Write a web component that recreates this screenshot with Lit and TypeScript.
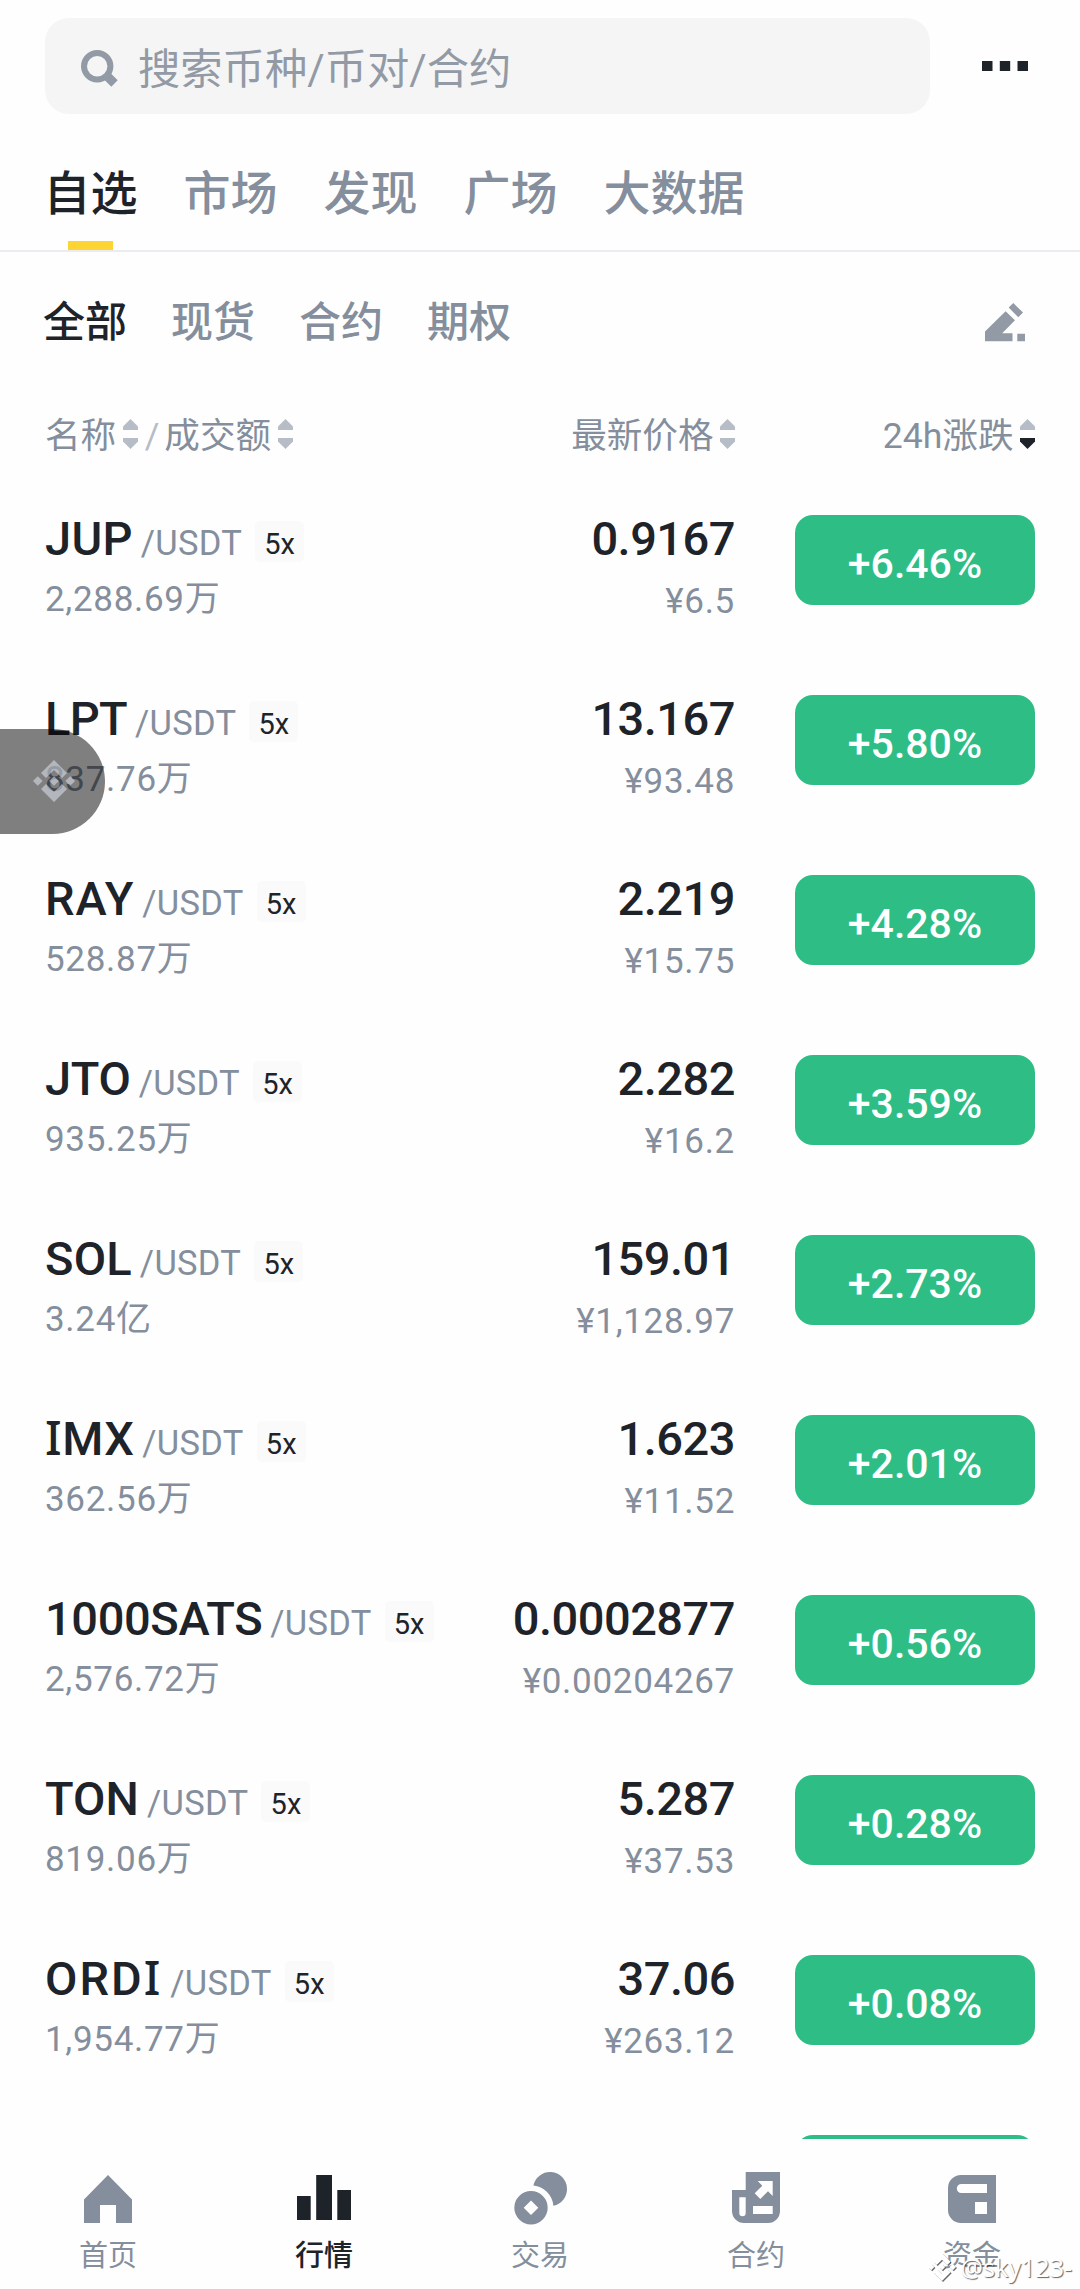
import { LitElement, html, css, svg } from "lit";
import { customElement, property } from "lit/decorators.js";
import { classMap } from "lit/directives/class-map.js";
import { styleMap } from "lit/directives/style-map.js";

interface Pair {
  symbol: string;
  tracking: number;
  volume: string;
  price: string;
  fiat: string;
  change: string;
}

const PAIRS: Pair[] = [
  { symbol: "JUP", tracking: 0.3, volume: "2,288.69万", price: "0.9167", fiat: "¥6.5", change: "+6.46%" },
  { symbol: "LPT", tracking: -0.7, volume: "837.76万", price: "13.167", fiat: "¥93.48", change: "+5.80%" },
  { symbol: "RAY", tracking: 0.8, volume: "528.87万", price: "2.219", fiat: "¥15.75", change: "+4.28%" },
  { symbol: "JTO", tracking: -0.3, volume: "935.25万", price: "2.282", fiat: "¥16.2", change: "+3.59%" },
  { symbol: "SOL", tracking: 0.2, volume: "3.24亿", price: "159.01", fiat: "¥1,128.97", change: "+2.73%" },
  { symbol: "IMX", tracking: 0.5, volume: "362.56万", price: "1.623", fiat: "¥11.52", change: "+2.01%" },
  { symbol: "1000SATS", tracking: -0.4, volume: "2,576.72万", price: "0.0002877", fiat: "¥0.00204267", change: "+0.56%" },
  { symbol: "TON", tracking: 0.1, volume: "819.06万", price: "5.287", fiat: "¥37.53", change: "+0.28%" },
  { symbol: "ORDI", tracking: 2, volume: "1,954.77万", price: "37.06", fiat: "¥263.12", change: "+0.08%" },
];

const logoShape = svg`
  <path d="M21 0 34 13 29 18 21 10 13 18 8 13Z"/>
  <path d="M21 42 34 29 29 24 21 32 13 24 8 29Z"/>
  <path d="M21 16.2 25.8 21 21 25.8 16.2 21Z"/>
  <path d="M4.8 16.2 9.6 21 4.8 25.8 0 21Z"/>
  <path d="M37.2 16.2 42 21 37.2 25.8 32.4 21Z"/>`;

@customElement("sort-arrows")
class SortArrows extends LitElement {
  @property({ type: Boolean }) down = false;
  static styles = css`
    :host { display: block; width: 15px; height: 30px; }
    svg { display: block; }
    .idle { fill: #b7bdc6; }
    .on { fill: #1e2329; }
  `;
  render() {
    return html`<svg width="15" height="30" viewBox="0 0 15 30">
      <path class="idle" d="M0 11V7.5L7.5 0 15 7.5V11Z" />
      <path class=${this.down ? "on" : "idle"} d="M0 19V22.5L7.5 30 15 22.5V19Z" />
    </svg>`;
  }
}

@customElement("pair-row")
class PairRow extends LitElement {
  @property({ attribute: false }) pair!: Pair;
  static styles = css`
    :host {
      display: grid;
      grid-template-columns: 1fr auto 240px;
      height: 180px;
      padding: 0 45px;
      box-sizing: border-box;
    }
    .cell { display: flex; flex-direction: column; padding-top: 14px; white-space: nowrap; }
    .title { display: flex; align-items: baseline; height: 60px; }
    .symbol, .price {
      font-size: 47px; line-height: 60px; font-weight: 500; letter-spacing: -0.5px; color: #1e2329;
    }
    .slab { font-family: "Noto Sans", sans-serif; line-height: 0; }
    .quote { font-size: 34.5px; line-height: 60px; margin-left: 8px; letter-spacing: 0.3px; color: #848e9c; }
    .lever {
      box-sizing: border-box; width: 49px; height: 41px; margin-left: 13px; border-radius: 5px;
      background: #fafafa; text-align: center; font-size: 29px; line-height: 47px; color: #1e2329;
      transform: translateY(-1px);
    }
    .minor { font-size: 35px; line-height: 40px; letter-spacing: 0.7px; color: #848e9c; margin-top: 11px; }
    .value { align-items: flex-end; margin-right: 60px; }
    .value .minor { margin-top: 13px; }
    .change {
      height: 90px; margin-top: 20px; border-radius: 18px; background: #2ebd85; color: #fff;
      text-align: center; font-size: 41px; font-weight: 500; line-height: 98px;
    }
  `;
  render() {
    const p = this.pair;
    const symbol = [...p.symbol].map((c) => (c === "I" ? html`<span class="slab">I</span>` : c));
    return html`
      <div class="cell">
        <div class="title">
          <span class="symbol" style=${styleMap({ letterSpacing: `${p.tracking}px` })}>${symbol}</span>
          <span class="quote">/USDT</span>
          <span class="lever">5x</span>
        </div>
        <div class="minor">${p.volume}</div>
      </div>
      <div class="cell value">
        <div class="price">${p.price}</div>
        <div class="minor">${p.fiat}</div>
      </div>
      <div class="change">${p.change}</div>
    `;
  }
}

const NAV = [
  { label: "首页", icon: svg`<path d="M0 27.5 24 3 48 27.5V51H32V33H16V51H0Z"/>` },
  {
    label: "行情",
    icon: svg`<path d="M-3 24H10.7V48H-3ZM16.2 3H32V48H16.2ZM37.3 18H51V48H37.3Z"/>`,
  },
  {
    label: "交易",
    icon: svg`<path fill-rule="evenodd" d="M-1.7 35.7a16.7 16.7 0 1 0 33.4 0a16.7 16.7 0 1 0-33.4 0ZM15 28.4 22.3 35.7 15 43 7.7 35.7Z"/>
      <path d="M17.4 13.4A17 17 0 1 1 37.4 33.7A22.4 22.4 0 0 0 17.4 13.4Z"/>`,
  },
  {
    label: "合约",
    icon: svg`<path fill-rule="evenodd" d="M13.7 0H48V39a12 12 0 0 1-12 12H12A12 12 0 0 1 0 39V18H13.7ZM25.7 9 30.3 13.7 22.7 21.3 28.3 27 36 19.3 40.7 24V9ZM7.3 25.3V41a3.2 3.2 0 0 0 6.4 0V25.3ZM21 34V42H40.7V34Z"/>`,
  },
  {
    label: "资金",
    icon: svg`<path fill-rule="evenodd" d="M13 3H48V51H13A13 13 0 0 1 0 38V16A13 13 0 0 1 13 3ZM13.3 12a4.5 4.5 0 0 0 0 9H39V12ZM27 30V42H39V30Z"/>`,
  },
];

@customElement("app-root")
class AppRoot extends LitElement {
  static styles = css`
    :host {
      display: flex; flex-direction: column; position: relative; overflow: hidden;
      width: 1080px; height: 2289px; background: #fefefe; color: #848e9c;
      font-family: Roboto, "Noto Sans CJK SC", sans-serif; white-space: nowrap;
    }
    svg { display: block; overflow: visible; }
    .top { display: flex; align-items: center; padding: 18px 52px 0 45px; height: 96px; flex: none; justify-content: space-between; }
    .search {
      display: flex; align-items: center; width: 885px; height: 96px; box-sizing: border-box;
      border-radius: 24px; background: #f5f5f5; padding-left: 36px; color: #929aa5;
    }
    .search span { font-size: 42.3px; line-height: 60px; margin-left: 20px; padding-top: 7px; }
    .tabs {
      display: flex; gap: 46px; padding-left: 43.5px; height: 136px; flex: none;
      border-bottom: 2px solid #eaecef; font-size: 47px; font-weight: 500;
    }
    .tab { display: flex; flex-direction: column; align-items: center; justify-content: flex-end; height: 136px; line-height: 60px; }
    .tab::after { content: ""; width: 45px; height: 9px; margin-top: 17.5px; }
    .tab.on { color: #1e2329; }
    .tab.on::after { background: #fcd535; }
    .filters { display: flex; align-items: center; padding: 44px 55px 0 43px; height: 50px; flex: none; font-size: 42px; font-weight: 500; }
    .filter { margin-right: 44px; line-height: 50px; padding-top: 4px; }
    .filter.on { color: #1e2329; }
    .edit { margin-left: auto; }
    .head {
      display: grid; grid-template-columns: 1fr auto 300px; padding: 65px 45px 0; height: 84px; flex: none;
      font-size: 35.6px; line-height: 50px;
    }
    .col { display: flex; align-items: center; height: 50px; }
    .col.end { justify-content: flex-end; }
    sort-arrows { margin: 0 0 5px 6.5px; }
    .sep { margin: 0 5px 0 7px; color: #b7bdc6; }
    .list { flex: 1; min-height: 0; overflow: hidden; }
    .peek { height: 90px; margin: 20px 45px 0 795px; border-radius: 18px; background: #2ebd85; }
    .nav { display: grid; grid-template-columns: repeat(5, 1fr); height: 150px; flex: none; background: #fefefe; }
    .item { display: flex; flex-direction: column; align-items: center; padding-top: 33px; font-size: 29px; line-height: 36px; }
    .item svg { fill: currentColor; margin-bottom: 14.5px; }
    .item.on { color: #1e2329; font-weight: 500; }
    .float {
      position: absolute; left: 0; top: 729px; width: 105px; height: 105px; box-sizing: border-box;
      border-radius: 0 52.5px 52.5px 0; background: rgba(0, 0, 0, 0.5); padding: 31px 0 0 33px;
    }
    .float svg { fill: #e8eefa; opacity: 0.5; }
    .mark {
      position: absolute; right: 8px; bottom: 7px; display: flex; align-items: center; gap: 4px;
      color: #fff; font: 25px/30px "Noto Sans", sans-serif;
      text-shadow: 1px 1px 1px rgba(0, 0, 0, 0.6);
    }
    .mark svg { fill: #fff; filter: drop-shadow(1px 1px 0.5px rgba(0, 0, 0, 0.6)); }
  `;

  render() {
    return html`
      <div class="top">
        <div class="search">
          <svg width="37" height="37" viewBox="0 0 37 37" fill="none" stroke="#929aa5">
            <circle cx="16.2" cy="18.2" r="13.2" stroke-width="6" />
            <path d="M25 27 33.5 35.5" stroke-width="9" />
          </svg>
          <span>搜索币种/币对/合约</span>
        </div>
        <svg width="46" height="10" viewBox="0 0 46 10" fill="#1e2329">
          <path d="M0 0h10.5v10H0ZM17.8 0h10.4v10H17.8ZM35.5 0H46v10H35.5Z" />
        </svg>
      </div>
      <div class="tabs">
        ${["自选", "市场", "发现", "广场", "大数据"].map(
          (t, i) => html`<div class=${classMap({ tab: true, on: i === 0 })}>${t}</div>`
        )}
      </div>
      <div class="filters">
        ${["全部", "现货", "合约", "期权"].map(
          (t, i) => html`<div class=${classMap({ filter: true, on: i === 0 })}>${t}</div>`
        )}
        <svg class="edit" width="40" height="39" viewBox="0 -1 40 39" fill="#929aa5">
          <path d="M0 28.5 20.6 8.3 30 17.3 17.2 30.3H27.5V38.3H0Z" />
          <path d="M28.3 0 38 9.6 33.3 14.3 23.7 4.6ZM32.3 30.8H40V38.3H32.3Z" />
        </svg>
      </div>
      <div class="head">
        <div class="col">
          名称<sort-arrows></sort-arrows><span class="sep">/</span>成交额<sort-arrows></sort-arrows>
        </div>
        <div class="col">最新价格<sort-arrows></sort-arrows></div>
        <div class="col end">24h涨跌<sort-arrows down></sort-arrows></div>
      </div>
      <div class="list">
        ${PAIRS.map((p) => html`<pair-row .pair=${p}></pair-row>`)}
        <div class="peek"></div>
      </div>
      <div class="nav">
        ${NAV.map(
          (n, i) => html`<div class=${classMap({ item: true, on: i === 1 })}>
            <svg width="48" height="51" viewBox="0 0 48 51">${n.icon}</svg>${n.label}
          </div>`
        )}
      </div>
      <div class="float"><svg width="42" height="42" viewBox="0 0 42 42">${logoShape}</svg></div>
      <div class="mark">
        <svg width="28" height="28" viewBox="0 0 42 42">${logoShape}</svg><span>@sky123-</span>
      </div>
    `;
  }
}
